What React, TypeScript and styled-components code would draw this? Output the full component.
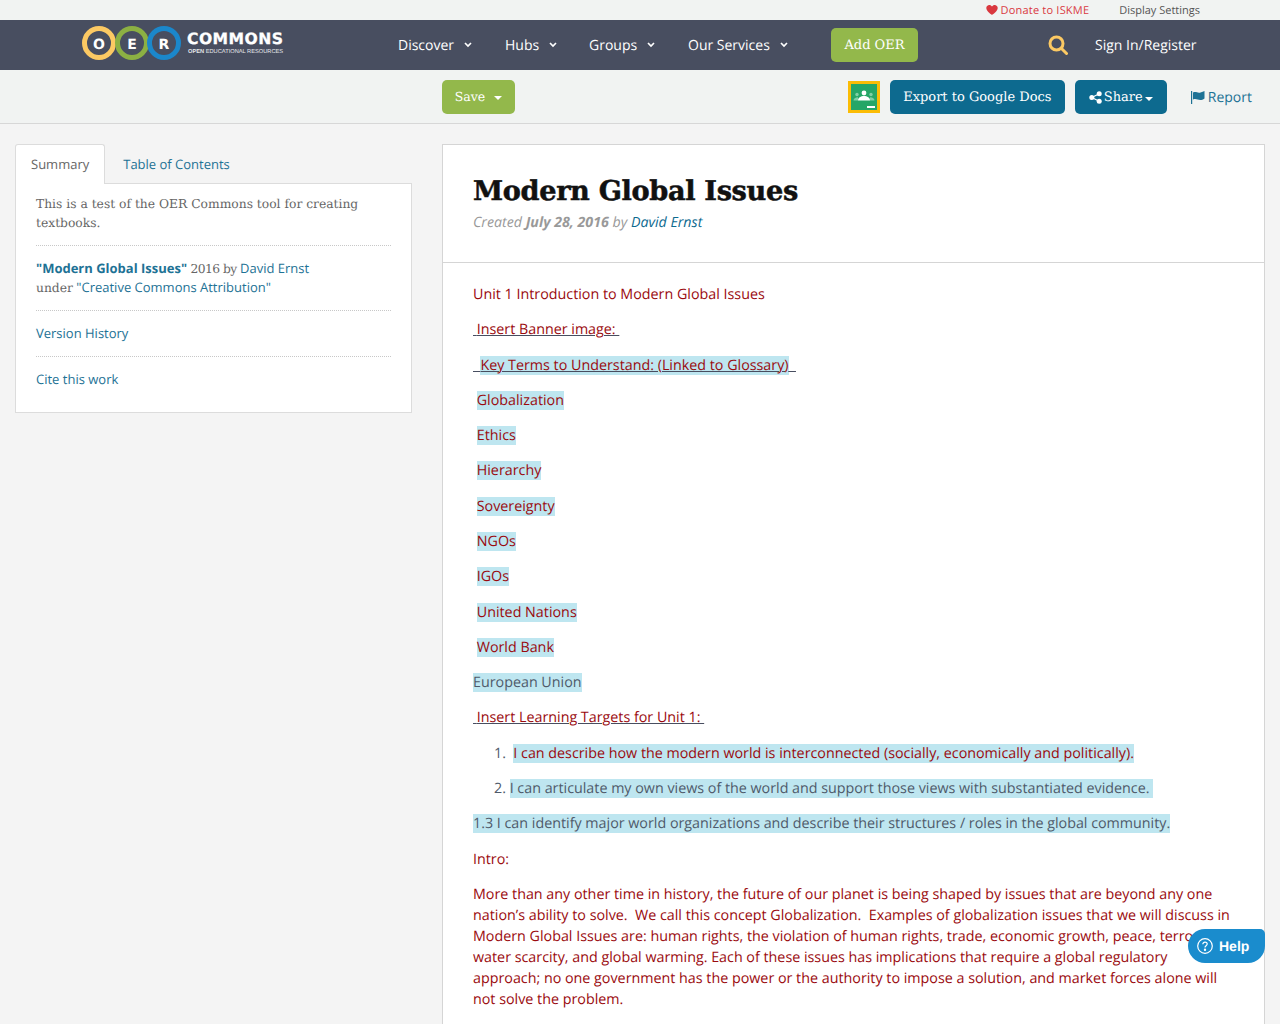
import React from "react";
import styled, { createGlobalStyle } from "styled-components";

const Global = createGlobalStyle`
  html, body { margin: 0; height: 100%; overflow: hidden; background: #f4f4f4; }
  body { font-family: "Open Sans", sans-serif; font-size: 14px; color: #666; text-rendering: geometricPrecision; }
  #root { height: 100%; }
  * { box-sizing: border-box; }
`;
const slab = `"DejaVu Serif", "Liberation Serif", serif`;

const Page = styled.div`position: relative; height: 1024px; overflow: hidden;`;
const TopBar = styled.div`
  height: 20px; background: #f1f3f2; display: flex; align-items: center; justify-content: flex-end;
  padding: 0 80px 0 0; gap: 30px; font-size: 11px;
`;
const Donate = styled.a`color: #d9383f; display: flex; align-items: center; gap: 3px; letter-spacing: .2px;`;
const TopLink = styled.a`color: #555;`;
const Nav = styled.div`height: 50px; background: #484e60; display: flex; align-items: center; padding-left: 82px;`;
const LogoWrap = styled.div`width: 316px; display: flex; align-items: center; gap: 6px; flex: none; padding-bottom: 4px;`;
const LogoText = styled.div`color: #fff; display: flex; flex-direction: column;`;
const LogoMain = styled.span`font-family: "DejaVu Sans", sans-serif; font-size: 15.6px; font-weight: 700; line-height: 16px; letter-spacing: .45px; -webkit-text-stroke: .3px #fff;`;
const LogoSub = styled.span`font-family: "Liberation Sans", sans-serif; font-size: 5.7px; line-height: 8px; color: #e4e6ea; margin: 1px 0 0 1px; white-space: nowrap;`;
const NavItems = styled.div`display: flex; align-items: center; width: 433px; flex: none;`;
const NavItem = styled.a<{ $w: number }>`
  width: ${p => p.$w}px; flex: none; color: #fff; font-size: 14px; display: flex; align-items: center; gap: 10px;
`;
const AddBtn = styled.a`
  width: 87px; height: 34px; border-radius: 5px; background: #93b84b; color: #fff; font-family: ${slab}; font-size: 13px;
  display: flex; align-items: center; justify-content: center; flex: none; padding-top: 1px;
`;
const NavRight = styled.div`display: flex; align-items: center; margin-left: 130px; gap: 27px; color: #fff; font-size: 14px;`;

const Toolbar = styled.div`height: 54px; background: #f1f3f2; border-bottom: 1px solid #d7d7d7; display: flex; align-items: center; padding: 0 28px 0 442px;`;
const SaveBtn = styled.a`
  width: 73px; height: 34px; border-radius: 5px; background: #93b84b; color: #fff; font-family: ${slab}; font-size: 12.5px;
  display: flex; align-items: center; justify-content: center; gap: 9px;
`;
const Caret = styled.i`width: 0; height: 0; border-left: 4px solid transparent; border-right: 4px solid transparent; border-top: 4px solid #fff; display: block; margin-top: 2px;`;
const ToolRight = styled.div`margin-left: auto; display: flex; align-items: center;`;
const Classroom = styled.div`width: 32px; height: 32px; border: 3px solid #fbbc05; background: #25a667; margin-right: 10px; display: flex;`;
const BlueBtn = styled.a<{ $w: number }>`
  width: ${p => p.$w}px; height: 34px; border-radius: 5px; background: #0d6a8f; color: #fff; font-size: 13px; padding-top: 2px;
  font-family: ${slab}; display: flex; align-items: center; justify-content: center; gap: 2px; margin-right: 10px; white-space: nowrap;
`;
const Report = styled.a`color: #1e7295; font-size: 14px; display: flex; align-items: center; gap: 3px; margin-left: 14px; padding-top: 2px;`;

const Content = styled.div`display: flex; align-items: flex-start; padding: 20px 15px 0; gap: 30px;`;
const Side = styled.div`width: 397px; flex: none;`;
const Tabs = styled.div`display: flex; height: 40px; position: relative; z-index: 1;`;
const Tab = styled.a<{ $active?: boolean }>`
  height: ${p => (p.$active ? 40 : 39)}px; padding: 0 15px ${p => (p.$active ? 1 : 0)}px; font-size: 13px; display: flex; align-items: center;
  color: ${p => (p.$active ? "#666" : "#1e7295")};
  background: ${p => (p.$active ? "#fff" : "transparent")};
  border: 1px solid ${p => (p.$active ? "#dcdcdc" : "transparent")};
  border-bottom: 0; border-radius: 3px 3px 0 0; margin-right: 2px;
`;
const TabBody = styled.div`background: #fff; border: 1px solid #dcdcdc; margin-top: -1px; padding: 10px 20px 23px; font-size: 13px; line-height: 19px;`;
const Sect = styled.div`padding: 0 0 13px; margin-bottom: 13px; border-bottom: 1px dotted #c8c8c8;
  &:last-child { border: 0; padding: 0; margin: 0; }
`;
const Serif = styled.span`font-family: ${slab}; color: #666; font-size: 12.3px; line-height: 1;`;
const Year = styled(Serif)`letter-spacing: -.55px;`;
const A = styled.a`color: #1e7295;`;
const BoldA = styled.a`color: #1e7295; font-weight: 700;`;

const Main = styled.div`width: 823px; flex: none; background: #fff; border: 1px solid #d5d5d5; min-height: 1000px;`;
const Head = styled.div`height: 118px; border-bottom: 1px solid #d5d5d5; padding: 28px 30px 0;`;
const Title = styled.h1`
  margin: 0; font-family: ${slab}; font-size: 27.2px; line-height: 36px; color: #111; font-weight: 700; letter-spacing: -.35px; -webkit-text-stroke: .5px #111;
`;
const Meta = styled.div`font-style: italic; color: #999; font-size: 14.2px; line-height: 21px; margin-top: 3px;`;
const MetaA = styled.a`color: #0d6a8f;`;
const Body = styled.div`padding: 21px 30px 0; color: #9a0a0e; font-size: 14.3px; line-height: 21px;`;
const P = styled.p`margin: 0 0 14.29px; white-space: pre-wrap;`;
const U = styled.span`text-decoration: underline; text-decoration-color: #484e60; text-decoration-thickness: 1px;`;
const Hi = styled.span<{ $grey?: boolean }>`
  background: #bee6f0; padding: 0;
  color: ${p => (p.$grey ? "#4f5a6a" : "inherit")};
`;
const Li = styled.p`margin: 0 0 14.29px; padding-left: 21px; white-space: pre-wrap; color: #4f5a6a;`;
const Red = styled.span`color: #9a0a0e;`;
const Help = styled.a`
  position: absolute; left: 1188px; top: 929px; width: 77px; height: 34px; background: #1a8ccd; color: #fff; font-family: "Liberation Sans", sans-serif;
  font-weight: 700; font-size: 14px; border-radius: 17px 5px 17px 17px; display: flex; align-items: center; gap: 6px; padding-left: 9px;
`;

const Chevron = () => (
  <svg width="8" height="6" viewBox="0 0 8 6" fill="none" stroke="#fff" strokeWidth="1.7"><path d="M1 1l3 3 3-3" /></svg>
);
const Ring = ({ cx, color, l }: { cx: number; color: string; l: string }) => (
  <g>
    <circle cx={cx} cy="17" r="14.5" fill="#484e60" stroke={color} strokeWidth="5" />
    <text x={cx} y="22.5" textAnchor="middle" fontFamily="DejaVu Sans" fontWeight="700" fontSize="14" fill="#fff">{l}</text>
  </g>
);

export default function App() {
  return (
    <Page>
      <Global />
      <TopBar>
        <Donate>
          <svg width="12" height="10" viewBox="0 0 24 21" fill="#d9383f"><path d="M12 21S0 14 0 6.500C0 2.800 2.800 0 6.400 0 8.700 0 10.800 1.200 12 3.200 13.200 1.200 15.300 0 17.600 0 21.200 0 24 2.800 24 6.500 24 14 12 21 12 21z" /></svg>
          Donate to ISKME
        </Donate>
        <TopLink>Display Settings</TopLink>
      </TopBar>
      <Nav>
        <LogoWrap>
          <svg width="99" height="34" viewBox="0 0 99 34">
            <Ring cx={17} color="#fcc963" l="O" />
            <Ring cx={50} color="#8cb043" l="E" />
            <Ring cx={82} color="#1b87cb" l="R" />
          </svg>
          <LogoText>
            <LogoMain>COMMONS</LogoMain>
            <LogoSub><b>OPEN</b> EDUCATIONAL RESOURCES</LogoSub>
          </LogoText>
        </LogoWrap>
        <NavItems>
          <NavItem $w={107}>Discover <Chevron /></NavItem>
          <NavItem $w={84}>Hubs <Chevron /></NavItem>
          <NavItem $w={99}>Groups <Chevron /></NavItem>
          <NavItem $w={143}>Our Services <Chevron /></NavItem>
        </NavItems>
        <AddBtn>Add OER</AddBtn>
        <NavRight>
          <svg width="20" height="20" viewBox="0 0 20 20" fill="none" stroke="#fcc963" strokeWidth="3"><circle cx="8.500" cy="8.500" r="6.500" /><path d="M13.500 13.500l5 5" strokeLinecap="round" /></svg>
          <span>Sign In/Register</span>
        </NavRight>
      </Nav>
      <Toolbar>
        <SaveBtn>Save <Caret /></SaveBtn>
        <ToolRight>
          <Classroom>
            <svg width="26" height="26" viewBox="0 0 26 26">
              <circle cx="13" cy="9" r="2.400" fill="#fff" />
              <path d="M7 16.500c0-2.800 2.800-4.500 6-4.500s6 1.700 6 4.500z" fill="#fff" />
              <circle cx="6" cy="10.500" r="1.700" fill="#7fcfa5" /><circle cx="20" cy="10.500" r="1.700" fill="#7fcfa5" />
              <path d="M2.500 16.500c0-2 1.700-3.300 4.500-3.300V16.500zM23.500 16.500c0-2-1.700-3.300-4.500-3.300V16.500z" fill="#7fcfa5" />
              <rect x="16" y="22" width="8" height="2" fill="#fff" />
            </svg>
          </Classroom>
          <BlueBtn $w={175}>Export to Google Docs</BlueBtn>
          <BlueBtn $w={92}>
            <svg width="13" height="13" viewBox="0 0 13 13" fill="#fff" stroke="#fff"><circle cx="2.800" cy="6.500" r="2.500" strokeWidth="0" /><circle cx="10.200" cy="2.800" r="2.500" strokeWidth="0" /><circle cx="10.200" cy="10.200" r="2.500" strokeWidth="0" /><path d="M2.800 6.500l7.400-3.700M2.800 6.500l7.400 3.700" strokeWidth="1.200" /></svg>
            Share <Caret />
          </BlueBtn>
          <Report>
            <svg width="14" height="13" viewBox="0 0 14 13" fill="#1e7295"><rect x="0" y="0" width="1.200" height="13" /><path d="M2 1.500c3-1.500 4.500 1 7.500 0 1.500-.4 3-1 4-1.500v7.500c-1.500 1-2.800 1.500-4.200 1.500-2.800 0-4-1.700-7.300-.5z" /></svg>
            Report
          </Report>
        </ToolRight>
      </Toolbar>
      <Content>
        <Side>
          <Tabs>
            <Tab $active>Summary</Tab>
            <Tab>Table of Contents</Tab>
          </Tabs>
          <TabBody>
            <Sect><Serif>This is a test of the OER Commons tool for creating textbooks.</Serif></Sect>
            <Sect>
              <BoldA>"Modern Global Issues"</BoldA> <Year>2016 by</Year> <A>David Ernst</A><br />
              <Serif>under</Serif> <A>"Creative Commons Attribution"</A>
            </Sect>
            <Sect><A>Version History</A></Sect>
            <Sect><A>Cite this work</A></Sect>
          </TabBody>
        </Side>
        <Main>
          <Head>
            <Title>Modern Global Issues</Title>
            <Meta>Created <b>July 28, 2016</b> by <MetaA>David Ernst</MetaA></Meta>
          </Head>
          <Body>
            <P>Unit 1 Introduction to Modern Global Issues</P>
            <P><U> Insert Banner image: </U></P>
            <P><U>  <Hi>Key Terms to Understand: (Linked to Glossary)</Hi>  </U></P>
            <P> <Hi>Globalization</Hi></P>
            <P> <Hi>Ethics</Hi></P>
            <P> <Hi>Hierarchy</Hi></P>
            <P> <Hi>Sovereignty</Hi></P>
            <P> <Hi>NGOs</Hi></P>
            <P> <Hi>IGOs</Hi></P>
            <P> <Hi>United Nations</Hi></P>
            <P> <Hi>World Bank</Hi></P>
            <P><Hi $grey>European Union</Hi></P>
            <P><U> Insert Learning Targets for Unit 1: </U></P>
            <Li>1.  <Hi><Red>I can describe how the modern world is interconnected (socially, economically and politically).</Red></Hi></Li>
            <Li>2. <Hi $grey>I can articulate my own views of the world and support those views with substantiated evidence.{"\u00a0"}</Hi></Li>
            <P><Hi $grey>1.3 I can identify major world organizations and describe their structures / roles in the global community.</Hi></P>
            <P>Intro:</P>
            <P>More than any other time in history, the future of our planet is being shaped by issues that are beyond any one nation’s ability to solve.  We call this concept Globalization.  Examples of globalization issues that we will discuss in Modern Global Issues are: human rights, the violation of human rights, trade, economic growth, peace, terrorism, water scarcity, and global warming. Each of these issues has implications that require a global regulatory approach; no one government has the power or the authority to impose a solution, and market forces alone will not solve the problem.</P>
          </Body>
        </Main>
      </Content>
      <Help>
        <svg width="16" height="16" viewBox="0 0 16 16" fill="none" stroke="#fff" strokeWidth="1.200"><circle cx="8" cy="8" r="7.300" /><path d="M5.800 6.200c0-1.300 1-2.100 2.200-2.100s2.200.8 2.200 2c0 1.700-2.200 1.700-2.200 3.400" /><circle cx="8" cy="11.800" r=".6" fill="#fff" /></svg>
        Help
      </Help>
    </Page>
  );
}
